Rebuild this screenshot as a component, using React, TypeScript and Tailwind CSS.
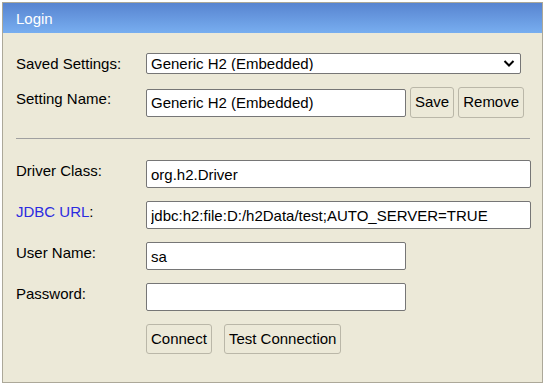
const inputCls =
  'h-[28px] border border-[#767676] rounded-[2px] bg-white pl-[4px] text-[15px] text-black outline-none';
const buttonCls =
  'h-[30px] px-[4px] border border-[#bab7a8] rounded-[3px] bg-[#ece9d8] text-[15px] text-black';

function Field({
  label,
  value,
  width,
  link,
}: {
  label: string;
  value: string;
  width: string;
  link?: boolean;
}) {
  return (
    <div className="flex">
      <div className="w-[130px] pt-[2px] leading-[17px]">
        {link ? (
          <>
            <span className="text-[#2b2be0]">JDBC URL</span>:
          </>
        ) : (
          label
        )}
      </div>
      <input readOnly value={value} className={`${inputCls} ${width}`} />
    </div>
  );
}

export default function App() {
  return (
    <div className="w-[544px] h-[383px] bg-white p-[2px]">
      <div className="w-[541px] h-[381px] border border-[#aca899] bg-[#ece9d8] font-['Liberation_Sans',Arial,sans-serif] text-[15px] text-black">
        <div className="h-[30px] flex items-center pl-[13px] bg-gradient-to-b from-[#5884d0] to-[#78aef0] text-white leading-none">
          Login
        </div>

        <div className="pl-[13px]">
          <div className="mt-[20px] flex items-center h-[21px]">
            <div className="w-[130px] leading-[17px]">Saved Settings:</div>
            <div className="relative w-[375px] h-[21px]">
              <select
                className="appearance-none w-full h-full border border-[#767676] rounded-[2px] bg-white pl-[4px] text-[15px] text-black leading-none outline-none"
                defaultValue="h2e"
              >
                <option value="h2e">Generic H2 (Embedded)</option>
              </select>
              <svg
                className="absolute right-[6px] top-[6px] pointer-events-none"
                width="12"
                height="9"
                viewBox="0 0 12 9"
              >
                <polyline points="1.5,2 6,6.5 10.5,2" fill="none" stroke="#000" strokeWidth="2" />
              </svg>
            </div>
          </div>

          <div className="mt-[13px] flex items-center h-[31px]">
            <div className="w-[130px] self-start pt-[3px] leading-[17px]">Setting Name:</div>
            <input readOnly value="Generic H2 (Embedded)" className={`${inputCls} w-[260px]`} />
            <button className={`${buttonCls} ml-[4px] h-[31px]`}>Save</button>
            <button className={`${buttonCls} ml-[4px] h-[31px]`}>Remove</button>
          </div>

          <div className="mt-[20px] h-px w-[514px] bg-[#a0a0a0]" />

          <div className="mt-[21px] flex flex-col gap-[13px]">
            <Field label="Driver Class:" value="org.h2.Driver" width="w-[385px]" />
            <Field
              label="JDBC URL:"
              value="jdbc:h2:file:D:/h2Data/test;AUTO_SERVER=TRUE"
              width="w-[385px]"
              link
            />
            <Field label="User Name:" value="sa" width="w-[260px]" />
            <Field label="Password:" value="" width="w-[260px]" />
          </div>

          <div className="mt-[13px] flex gap-[12px] pl-[130px]">
            <button className={buttonCls}>Connect</button>
            <button className={buttonCls}>Test Connection</button>
          </div>
        </div>
      </div>
    </div>
  );
}
